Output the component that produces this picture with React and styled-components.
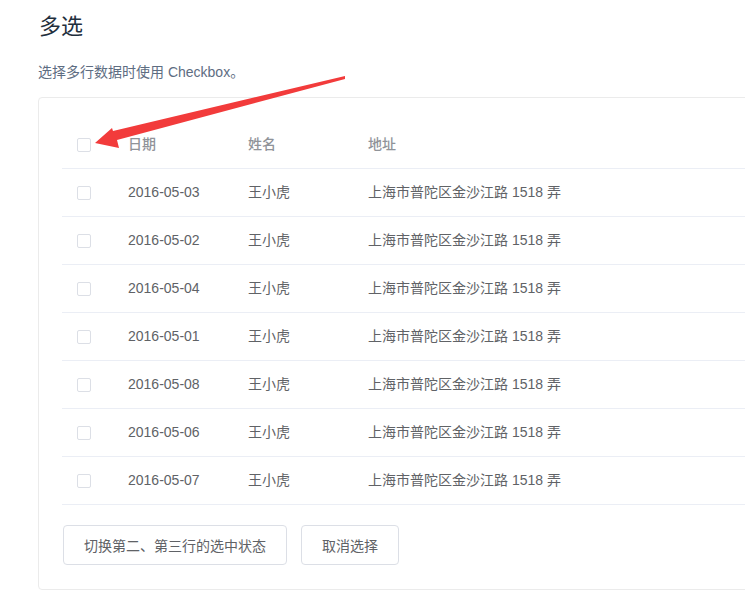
import React from 'react';
import styled, { createGlobalStyle } from 'styled-components';

const rows = [
    { date: '2016-05-03', name: '王小虎', address: '上海市普陀区金沙江路 1518 弄' },
    { date: '2016-05-02', name: '王小虎', address: '上海市普陀区金沙江路 1518 弄' },
    { date: '2016-05-04', name: '王小虎', address: '上海市普陀区金沙江路 1518 弄' },
    { date: '2016-05-01', name: '王小虎', address: '上海市普陀区金沙江路 1518 弄' },
    { date: '2016-05-08', name: '王小虎', address: '上海市普陀区金沙江路 1518 弄' },
    { date: '2016-05-06', name: '王小虎', address: '上海市普陀区金沙江路 1518 弄' },
    { date: '2016-05-07', name: '王小虎', address: '上海市普陀区金沙江路 1518 弄' },
];

function App() {
    return (
        <>
            <GlobalStyle />
            <StyledPage>
                <h3 className='page__title'>多选</h3>
                <p className='page__desc'>选择多行数据时使用 Checkbox。</p>
                <DemoBlock>
                    <Table>
                        <colgroup>
                            <col width='55' />
                            <col width='120' />
                            <col width='120' />
                            <col />
                        </colgroup>
                        <thead>
                            <tr>
                                <Cell $selection as='th'>
                                    <Checkbox />
                                </Cell>
                                <Cell as='th'>日期</Cell>
                                <Cell as='th'>姓名</Cell>
                                <Cell as='th'>地址</Cell>
                            </tr>
                        </thead>
                        <tbody>
                            {rows.map(item => (
                                <tr key={item.date}>
                                    <Cell $selection>
                                        <Checkbox />
                                    </Cell>
                                    <Cell>{item.date}</Cell>
                                    <Cell>{item.name}</Cell>
                                    <Cell>{item.address}</Cell>
                                </tr>
                            ))}
                        </tbody>
                    </Table>
                    <ButtonRow>
                        <Button type='button'>切换第二、第三行的选中状态</Button>
                        <Button type='button'>取消选择</Button>
                    </ButtonRow>
                </DemoBlock>
                {/* annotation arrow drawn over the demo */}
                <Arrow width='745' height='590' viewBox='0 0 745 590'>
                    <polygon
                        points='95,143 112,128 113,131 345,76 345,79 117,140 119,148'
                        fill='#f23b3b'
                    />
                </Arrow>
            </StyledPage>
        </>
    );
}

const GlobalStyle = createGlobalStyle`
    html, body {
        margin: 0;
        background: #fff;
        overflow: hidden;
    }

    body {
        font-family: 'Liberation Sans', 'Noto Sans CJK SC', sans-serif;
    }
`;

const StyledPage = styled.div`
    position: relative;
    width: 745px;
    height: 590px;
    padding: 10px 0 0 38px;
    box-sizing: border-box;
    overflow: hidden;

    .page__title {
        margin: 0 0 19px 1px;
        font-size: 22px;
        line-height: 33px;
        font-weight: 400;
        color: #1f2f3d;
    }

    .page__desc {
        margin: 0 0 14px 0;
        font-size: 14px;
        line-height: 21px;
        color: #5e6d82;
    }
`;

const DemoBlock = styled.div`
    width: 760px;
    border: 1px solid #ebebeb;
    border-radius: 4px;
    padding: 23px 0 24px 23px;
    box-sizing: border-box;
`;

const Table = styled.table`
    width: 100%;
    border-collapse: collapse;
    table-layout: fixed;
    font-size: 14px;
    color: #606266;
`;

const Cell = styled.td`
    height: 47px;
    padding: 0 0 0 ${({ $selection }) => ($selection ? '15px' : '11px')};
    border-bottom: 1px solid #ebeef5;
    text-align: left;
    vertical-align: middle;
    font-weight: ${({ as }) => (as === 'th' ? 500 : 400)};
    color: ${({ as }) => (as === 'th' ? '#909399' : '#606266')};
    white-space: nowrap;
    line-height: 23px;
`;

const Checkbox = styled.span`
    display: block;
    width: 14px;
    height: 14px;
    border: 1px solid #dcdfe6;
    border-radius: 2px;
    background: #fff;
    box-sizing: border-box;
    margin-top: 1px;
`;

const ButtonRow = styled.div`
    display: flex;
    gap: 14px;
    margin-top: 20px;
    padding-left: 1px;
`;

const Button = styled.button`
    height: 40px;
    padding: 0 20px;
    border: 1px solid #dcdfe6;
    border-radius: 4px;
    background: #fff;
    color: #606266;
    font-family: 'Liberation Sans', 'Noto Sans CJK SC', sans-serif;
    font-size: 14px;
    cursor: pointer;
`;

const Arrow = styled.svg`
    position: absolute;
    top: 0;
    left: 0;
    pointer-events: none;
`;

export default App;
